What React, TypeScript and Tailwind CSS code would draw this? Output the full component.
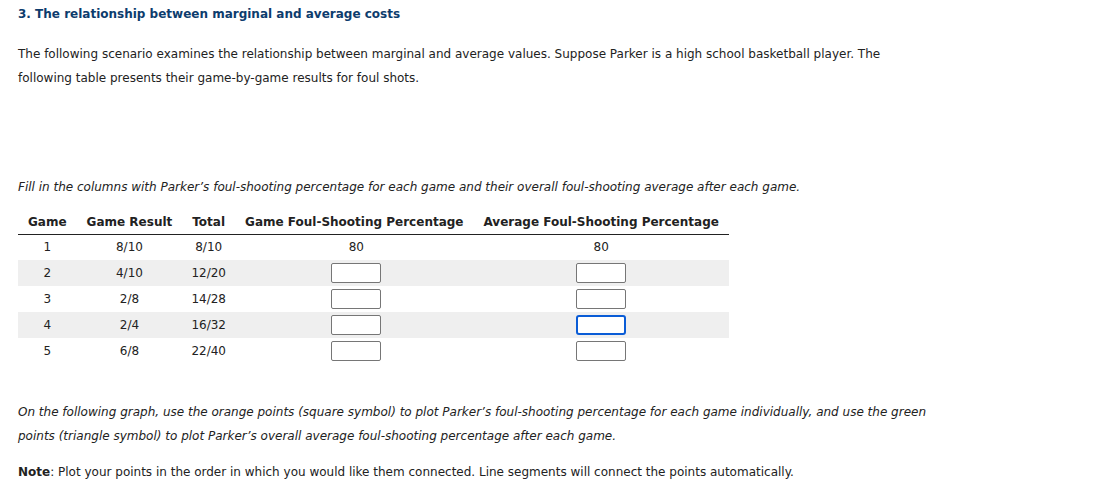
export default function App() {
  const rows = [
    { game: 1, result: "8/10", total: "8/10", pct: "80", avg: "80" },
    { game: 2, result: "4/10", total: "12/20" },
    { game: 3, result: "2/8", total: "14/28" },
    { game: 4, result: "2/4", total: "16/32", focus: true },
    { game: 5, result: "6/8", total: "22/40" },
  ]

  const box = "block mx-auto w-[50px] h-[20px] rounded-[2px] border border-[#767676] bg-white"
  const boxFocus = "block mx-auto w-[50px] h-[20px] rounded-[3px] border-2 border-[#0a5cd6] bg-white"

  return (
    <div className="bg-white min-h-[495px] pl-[18px] pt-[2px] text-[12px] text-[#222] font-['DejaVu_Sans',Verdana,sans-serif]">
      <h2 className="font-bold text-[#0d3c6d] leading-6">3. The relationship between marginal and average costs</h2>

      <p className="mt-4 leading-6">
        The following scenario examines the relationship between marginal and average values. Suppose Parker is a high
        school basketball player. The
        <br />
        following table presents their game-by-game results for foul shots.
      </p>

      <p className="mt-[85px] italic leading-6">
        Fill in the columns with Parker’s foul-shooting percentage for each game and their overall foul-shooting average
        after each game.
      </p>

      <table className="mt-[11px] border-collapse text-center">
        <thead>
          <tr className="border-b border-[#222] font-bold">
            <th className="h-[24px] px-[10px]">Game</th>
            <th className="h-[24px] px-[10px]">Game Result</th>
            <th className="h-[24px] px-[10px]">Total</th>
            <th className="h-[24px] px-[10px]">Game Foul-Shooting Percentage</th>
            <th className="h-[24px] px-[10px]">Average Foul-Shooting Percentage</th>
          </tr>
        </thead>
        <tbody>
          {rows.map((r, i) => (
            <tr key={r.game} className={i % 2 === 1 ? "bg-[#efefef]" : ""}>
              <td className="h-[26px]">{r.game}</td>
              <td className="h-[26px]">{r.result}</td>
              <td className="h-[26px]">{r.total}</td>
              <td className="h-[26px] pl-[4px]">{r.pct ?? <span className={box} />}</td>
              <td className="h-[26px]">{r.avg ?? <span className={r.focus ? boxFocus : box} />}</td>
            </tr>
          ))}
        </tbody>
      </table>

      <p className="mt-[36px] italic leading-6">
        On the following graph, use the orange points (square symbol) to plot Parker’s foul-shooting percentage for each
        game individually, and use the green
        <br />
        points (triangle symbol) to plot Parker’s overall average foul-shooting percentage after each game.
      </p>

      <p className="mt-3 leading-6">
        <span className="font-bold">Note</span>: Plot your points in the order in which you would like them connected.
        Line segments will connect the points automatically.
      </p>
    </div>
  )
}
